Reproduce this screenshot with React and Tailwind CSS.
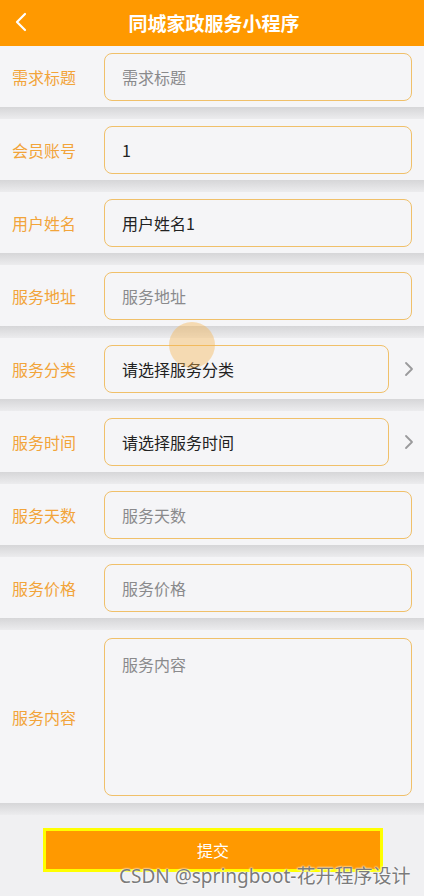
import React, { useState } from "react"

const fields = [
    { label: "需求标题", placeholder: "需求标题", value: "" },
    { label: "会员账号", placeholder: "会员账号", value: "1" },
    { label: "用户姓名", placeholder: "用户姓名", value: "用户姓名1" },
    { label: "服务地址", placeholder: "服务地址", value: "" },
    { label: "服务分类", select: "请选择服务分类" },
    { label: "服务时间", select: "请选择服务时间" },
    { label: "服务天数", placeholder: "服务天数", value: "" },
    { label: "服务价格", placeholder: "服务价格", value: "" },
]

const font = { fontFamily: '"Noto Sans CJK SC", "Noto Sans", sans-serif' }

const Gap = () => <div className="h-[12px] bg-gradient-to-b from-[#d6d6d8] to-[#ececee]" />

const App = () => {
    const [form, setForm] = useState(() => fields.map((f) => f.value || ""))
    const [content, setContent] = useState("")

    return (
        <div className="relative min-h-[896px] w-[424px] overflow-hidden bg-[#f0f0f2]" style={font}>
            {/* Header */}
            <div className="relative flex h-[46px] items-center justify-center bg-[#ff9900]">
                <svg className="absolute left-[13px] top-[11px]" width="16" height="22" viewBox="0 0 16 22" fill="none">
                    <path d="M12 3 L4 11 L12 19" stroke="#fff" strokeWidth="2.2" strokeLinecap="round" strokeLinejoin="round" />
                </svg>
                <span className="pl-[4px] text-[19px] font-bold text-white">同城家政服务小程序</span>
            </div>

            {fields.map((f, i) => (
                <div key={f.label}>
                    <div className="flex h-[61px] items-center bg-[#f5f5f7] pl-[12px]">
                        <span className="w-[92px] text-[16px] text-[#f2a43a]">{f.label}</span>
                        {f.select ? (
                            <>
                                <div className="flex h-[48px] w-[285px] items-center rounded-[8px] border-[1.5px] border-[#f0c06a] px-[17px] text-[16px] text-[#222]">
                                    {f.select}
                                </div>
                                <svg className="ml-[14px]" width="12" height="16" viewBox="0 0 12 16" fill="none">
                                    <path d="M3 2 L9 8 L3 14" stroke="#9a9a9c" strokeWidth="1.8" strokeLinecap="round" strokeLinejoin="round" />
                                </svg>
                            </>
                        ) : (
                            <input
                                value={form[i]}
                                placeholder={f.placeholder}
                                onChange={(e) => {
                                    const next = [...form]
                                    next[i] = e.target.value
                                    setForm(next)
                                }}
                                style={font}
                                className="h-[48px] w-[308px] rounded-[8px] border-[1.5px] border-[#f0c06a] bg-transparent px-[17px] text-[16px] text-[#222] outline-none placeholder:text-[#8a8a8c]"
                            />
                        )}
                    </div>
                    <Gap />
                </div>
            ))}

            {/* 服务内容 */}
            <div className="flex h-[173px] items-center bg-[#f5f5f7] pl-[12px]">
                <span className="w-[92px] text-[16px] text-[#f2a43a]">服务内容</span>
                <textarea
                    value={content}
                    placeholder="服务内容"
                    onChange={(e) => setContent(e.target.value)}
                    style={font}
                    className="h-[158px] w-[308px] resize-none rounded-[8px] border-[1.5px] border-[#f0c06a] bg-transparent px-[17px] py-[13px] text-[16px] text-[#222] outline-none placeholder:text-[#8a8a8c]"
                ></textarea>
            </div>
            <Gap />

            <div className="flex justify-center pl-[2px] pt-[13px]">
                <button className="h-[44px] w-[340px] border-[3px] border-[#ffff00] bg-[#ff9900] text-[16px] text-white" style={font}>
                    提交
                </button>
            </div>

            {/* touch indicator */}
            <div className="absolute left-[169px] top-[322px] h-[46px] w-[46px] rounded-full bg-[#f5b24a] opacity-40" />

            {/* watermark */}
            <div
                className="absolute left-[119px] top-[862px] text-[19px] text-[#7b7b7b]"
                style={{ textShadow: "0 0 2px #fff, 0 0 2px #fff", fontFamily: '"Noto Sans", "Noto Sans CJK SC", sans-serif' }}
            >
                CSDN @springboot-花开程序设计
            </div>
        </div>
    )
}

export default App
